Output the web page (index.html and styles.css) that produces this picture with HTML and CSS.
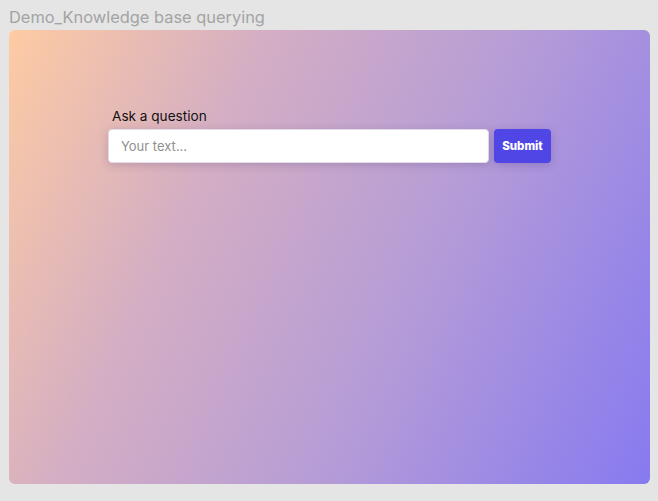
FILE: index.html
```html
<!DOCTYPE html>
<html lang="en">
<head>
    <meta charset="UTF-8">
    <meta name="viewport" content="width=device-width, initial-scale=1.0">
    <title>Demo_Knowledge base querying</title>
    <link rel="stylesheet" href="styles.css">
</head>
<body>
    <div class="titulo">Demo_Knowledge base querying</div>
    <div class="lienzo">
        <form class="formulario" action="#">
            <label for="pregunta">Ask a question</label>
            <div class="fila">
                <input type="text" id="pregunta" placeholder="Your text...">
                <button type="submit">Submit</button>
            </div>
        </form>
    </div>
</body>
</html>
```

FILE: styles.css
```css
body{
    margin: 0;
    background-color: #e5e5e5;
    font-family: Inter, "Noto Sans", sans-serif;
    padding: 0 8px 0 9px;
}
.titulo{
    color: #a3a3a3;
    font-size: 16.4px;
    height: 30px;
    line-height: 35px;
}
.lienzo{
    height: 454px;
    border-radius: 6px;
    background: linear-gradient(115deg, #fecba3 0%, #d4aec3 30%, #b79dd6 60%, #877af0 100%);
    display: flex;
    justify-content: center;
    padding-top: 78px;
    box-sizing: border-box;
}
.formulario{
    width: 443px;
}
label{
    display: block;
    font-size: 13.6px;
    color: #111;
    margin: 0 0 5px 4px;
    line-height: 16px;
}
.fila{
    display: flex;
    gap: 5px;
}
input{
    flex: 1;
    height: 34px;
    box-sizing: border-box;
    border: 1px solid #e2dde8;
    border-radius: 4px;
    padding: 0 12px;
    font-family: Inter, "Noto Sans", sans-serif;
    font-size: 13px;
    box-shadow: 0 2px 8px rgba(80, 60, 110, 0.25);
    outline: none;
}
input::placeholder{
    color: #8f8f8f;
}
button{
    width: 57px;
    height: 34px;
    border: none;
    border-radius: 4px;
    background-color: #4f46e5;
    color: #fff;
    font-family: Inter, "Noto Sans", sans-serif;
    font-weight: 800;
    font-size: 11.5px;
    box-shadow: 0 2px 8px rgba(60, 40, 120, 0.25);
}
```
